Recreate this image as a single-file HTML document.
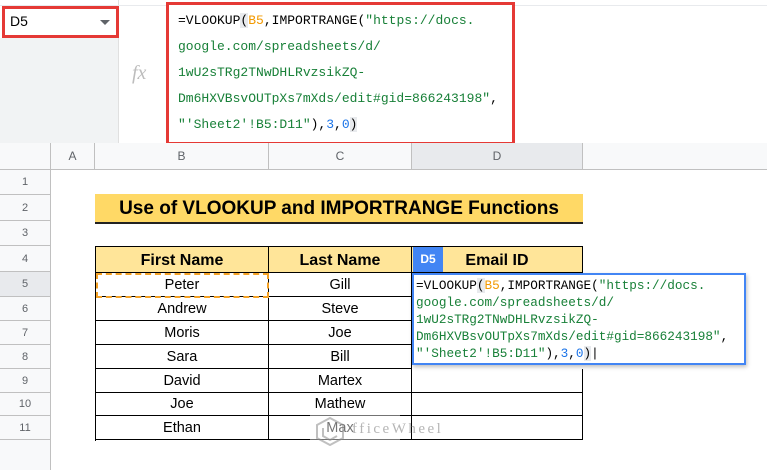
<!DOCTYPE html>
<html><head><meta charset="utf-8"><style>
*{margin:0;padding:0;box-sizing:border-box}
body{width:767px;height:470px;overflow:hidden;background:#fff;font-family:"Liberation Sans",sans-serif;position:relative}
.a{position:absolute}
.mono{font-family:"Liberation Mono",monospace}
.g{color:#188038}.o{color:#f29900}.b{color:#1a73e8}
.hl{background:#e8eaed}
.ch{position:absolute;top:143px;height:27px;border-right:1px solid #c0c0c0;border-bottom:1px solid #c0c0c0;background:#f8f9fa;color:#5f6368;font-size:12px;text-align:center;line-height:27px}
.rh{position:absolute;left:0;width:51px;border-right:1px solid #c0c0c0;border-bottom:1px solid #c0c0c0;background:#f8f9fa;color:#5f6368;font-size:11px;text-align:center}
.c{position:absolute;border-right:1.5px solid #000;border-bottom:1.5px solid #000;text-align:center;font-size:14.5px;color:#000}
</style></head><body>
<div class="a" style="left:0;top:0;width:767px;height:143px;background:#fff"></div>
<div class="a" style="left:0;top:38px;width:118px;height:105px;background:#f1f3f4"></div>
<div class="a" style="left:118px;top:0;width:1px;height:143px;background:#e0e0e0"></div>
<div class="a" style="left:0;top:5px;width:767px;height:1px;background:#e8eaed"></div>
<div class="a" style="left:2px;top:6px;width:117px;height:32px;border:3px solid #e53935;background:#fff;font-size:14px;padding:4px 5px;color:#000">D5</div>
<div class="a" style="left:100px;top:20px;width:0;height:0;border-left:5px solid transparent;border-right:5px solid transparent;border-top:5px solid #5f6368"></div>
<div class="a" style="left:132px;top:62px;font-family:'Liberation Serif',serif;font-style:italic;font-size:20px;color:#bdbdbd">fx</div>
<div class="a" style="left:166px;top:2px;width:349px;height:143px;border:3px solid #e53935;background:#fff"></div>
<div class="a mono" style="left:178px;top:8px;font-size:13px;line-height:26px;white-space:pre;color:#000">=VLOOKUP<span class="hl">(</span><span class="o">B5</span>,IMPORTRANGE(<span class="g">"https://docs.</span>
<span class="g">google.com/spreadsheets/d/</span>
<span class="g">1wU2sTRg2TNwDHLRvzsikZQ-</span>
<span class="g">Dm6HXVBsvOUTpXs7mXds/edit#gid=866243198"</span>,
<span class="g">"'Sheet2'!B5:D11"</span>),<span class="b">3</span>,<span class="b">0</span><span class="hl">)</span></div>

<div class="ch" style="left:0;width:51px"></div>
<div class="ch" style="left:51px;width:44px">A</div>
<div class="ch" style="left:95px;width:174px">B</div>
<div class="ch" style="left:269px;width:143px">C</div>
<div class="ch" style="left:412px;width:171px;background:#e8eaed">D</div>
<div class="ch" style="left:583px;width:184px;border-right:none"></div>

<div class="rh" style="top:170px;height:25px;line-height:25px">1</div>
<div class="rh" style="top:195px;height:26px;line-height:26px">2</div>
<div class="rh" style="top:221px;height:25px;line-height:25px">3</div>
<div class="rh" style="top:246px;height:26px;line-height:26px">4</div>
<div class="rh" style="top:272px;height:25px;line-height:25px;background:#e8eaed">5</div>
<div class="rh" style="top:297px;height:24px;line-height:24px">6</div>
<div class="rh" style="top:321px;height:24px;line-height:24px">7</div>
<div class="rh" style="top:345px;height:24px;line-height:24px">8</div>
<div class="rh" style="top:369px;height:24px;line-height:24px">9</div>
<div class="rh" style="top:393px;height:23px;line-height:23px">10</div>
<div class="rh" style="top:416px;height:24px;line-height:24px">11</div>
<div class="rh" style="top:440px;height:30px;border-bottom:none"></div>

<div class="a" style="left:95px;top:194px;width:488px;height:30px;background:#ffd966;border-bottom:2px solid #222;font-weight:bold;font-size:19px;text-align:center;line-height:30px">Use of VLOOKUP and IMPORTRANGE Functions</div>

<div class="a" style="left:95px;top:246px;width:488px;height:195px;border-left:1.5px solid #000;border-top:1.5px solid #000"></div>
<div class="c" style="left:95px;top:246px;width:174px;height:27px;line-height:27px;background:#ffe599;font-weight:bold;font-size:16px;border-left:1.5px solid #000;border-top:1.5px solid #000">First Name</div>
<div class="c" style="left:269px;top:246px;width:143px;height:27px;line-height:27px;background:#ffe599;font-weight:bold;font-size:16px;border-top:1.5px solid #000">Last Name</div>
<div class="c" style="left:412px;top:246px;width:171px;height:27px;line-height:27px;background:#ffe599;font-weight:bold;font-size:16px;border-top:1.5px solid #000">Email ID</div>

<div class="c" style="left:95px;top:273px;width:174px;height:24px;line-height:24px;border-left:1.5px solid #000">Peter</div>
<div class="c" style="left:269px;top:273px;width:143px;height:24px;line-height:24px">Gill</div>
<div class="c" style="left:95px;top:297px;width:174px;height:24px;line-height:24px;border-left:1.5px solid #000">Andrew</div>
<div class="c" style="left:269px;top:297px;width:143px;height:24px;line-height:24px">Steve</div>
<div class="c" style="left:95px;top:321px;width:174px;height:24px;line-height:24px;border-left:1.5px solid #000">Moris</div>
<div class="c" style="left:269px;top:321px;width:143px;height:24px;line-height:24px">Joe</div>
<div class="c" style="left:95px;top:345px;width:174px;height:24px;line-height:24px;border-left:1.5px solid #000">Sara</div>
<div class="c" style="left:269px;top:345px;width:143px;height:24px;line-height:24px">Bill</div>
<div class="c" style="left:95px;top:369px;width:174px;height:24px;line-height:24px;border-left:1.5px solid #000">David</div>
<div class="c" style="left:269px;top:369px;width:143px;height:24px;line-height:24px">Martex</div>
<div class="c" style="left:412px;top:369px;width:171px;height:24px"></div>
<div class="c" style="left:95px;top:393px;width:174px;height:23px;line-height:23px;border-left:1.5px solid #000">Joe</div>
<div class="c" style="left:269px;top:393px;width:143px;height:23px;line-height:23px">Mathew</div>
<div class="c" style="left:412px;top:393px;width:171px;height:23px"></div>
<div class="c" style="left:95px;top:416px;width:174px;height:24px;line-height:24px;border-left:1.5px solid #000">Ethan</div>
<div class="c" style="left:269px;top:416px;width:143px;height:24px;line-height:24px">Max</div>
<div class="c" style="left:412px;top:416px;width:171px;height:24px"></div>

<div class="a" style="left:96px;top:273px;width:173px;height:25px;border:2px dashed #f4a226"></div>

<div class="a" style="left:413px;top:247px;width:30px;height:25px;background:#4285f4;color:#fff;font-weight:bold;font-size:12px;text-align:center;line-height:25px">D5</div>
<div class="a" style="left:412px;top:273px;width:334px;height:92px;border:2px solid #4285f4;background:#fff;box-shadow:1px 2px 4px rgba(0,0,0,.25)"></div>
<div class="a mono" style="left:416px;top:277px;font-size:12.7px;line-height:17px;white-space:pre;color:#000">=VLOOKUP<span class="hl">(</span><span class="o">B5</span>,IMPORTRANGE(<span class="g">"https://docs.</span>
<span class="g">google.com/spreadsheets/d/</span>
<span class="g">1wU2sTRg2TNwDHLRvzsikZQ-</span>
<span class="g">Dm6HXVBsvOUTpXs7mXds/edit#gid=866243198"</span>,
<span class="g">"'Sheet2'!B5:D11"</span>),<span class="b">3</span>,<span class="b">0</span><span class="hl">)</span>|</div>

<div class="a" style="left:310px;top:414px;width:90px;height:30px;background:rgba(255,255,255,.45)"></div>
<div class="a" style="left:352px;top:421px;font-family:'Liberation Serif',serif;font-size:15px;letter-spacing:2.5px;color:rgba(120,120,120,.55)">fficeWheel</div>
<svg class="a" style="left:312px;top:416px" width="36" height="30" viewBox="0 0 36 30"><path d="M18 2 L31 9 L31 22 L18 29 L5 22 L5 9 Z" fill="none" stroke="rgba(140,140,140,.55)" stroke-width="2"/><path d="M11 12 L11 20 L18 24 L25 20" fill="none" stroke="rgba(140,140,140,.55)" stroke-width="2"/></svg>
</body></html>
